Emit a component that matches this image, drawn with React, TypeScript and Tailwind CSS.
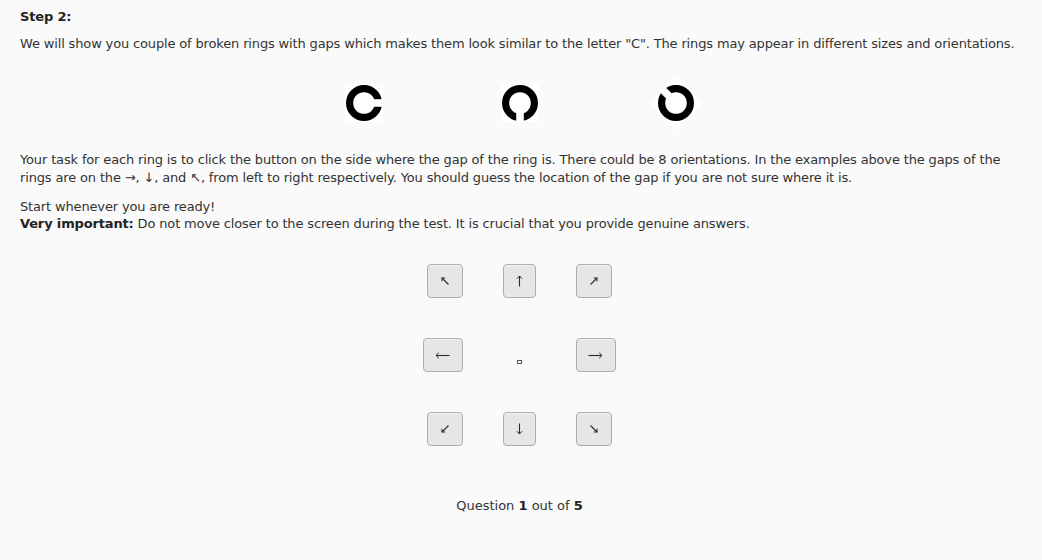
import React from "react"

type Dir = "ul" | "u" | "ur" | "l" | "r" | "dl" | "d" | "dr"

// tiny arrow glyph drawn to match the button labels
function ArrowIcon({ dir }: { dir: Dir }) {
  if (dir === "l" || dir === "r") {
    return (
      <svg width="15" height="7" viewBox="0 0 15 7" className={dir === "r" ? "rotate-180" : ""}>
        <path d="M1 3.5H14.5" stroke="#2b2b2b" strokeWidth="1.1" />
        <path d="M3.8 0.8L1 3.5L3.8 6.2" stroke="#2b2b2b" strokeWidth="1" fill="none" />
      </svg>
    )
  }
  if (dir === "u" || dir === "d") {
    return (
      <svg width="7" height="12" viewBox="0 0 7 12" className={dir === "d" ? "rotate-180" : ""}>
        <path d="M3.5 1V11.5" stroke="#2b2b2b" strokeWidth="1.1" />
        <path d="M0.8 3.8L3.5 1L6.2 3.8" stroke="#2b2b2b" strokeWidth="1" fill="none" />
      </svg>
    )
  }
  const rot: Record<string, string> = { ul: "", ur: "rotate-90", dr: "rotate-180", dl: "-rotate-90" }
  return (
    <svg width="8" height="8" viewBox="0 0 8 8" className={rot[dir]}>
      <path d="M1 1L7.5 7.5" stroke="#2b2b2b" strokeWidth="1.1" />
      <path d="M1 4.2V1H4.2" stroke="#2b2b2b" strokeWidth="1.1" fill="none" />
    </svg>
  )
}

function ArrowButton({ dir, w }: { dir: Dir; w: string }) {
  return (
    <button
      className={`${w} h-[34px] flex items-center justify-center rounded-[4px] border border-[#adadad] bg-[#e6e6e6] shadow-[inset_0_1px_0_rgba(255,255,255,0.6)]`}
    >
      <ArrowIcon dir={dir} />
    </button>
  )
}

function Ring({ rotate }: { rotate: string }) {
  return (
    <div className={`w-[38px] h-[38px] bg-white ${rotate}`}>
      <svg width="38" height="38" viewBox="0 0 38 38">
        <circle cx="19" cy="19" r="14.4" stroke="#000" strokeWidth="7.2" fill="none" />
        <rect x="19" y="15.2" width="19" height="7.6" fill="#fff" />
      </svg>
    </div>
  )
}

export default function App() {
  return (
    <div className="min-h-[560px] bg-[#fafafa] px-5 pt-[8px] text-[13px] tracking-[-0.15px] text-[#333] font-['DejaVu_Sans',Verdana,sans-serif]">
      <p className="font-bold leading-[18px] text-[#222]">Step 2:</p>
      <p className="mt-[9px] leading-[18px]">
        We will show you couple of broken rings with gaps which makes them look similar to the letter "C". The rings may appear in different sizes and orientations.
      </p>

      {/* Example rings */}
      <div className="mt-[31px] flex justify-center gap-[118px] pr-[3px]">
        <Ring rotate="" />
        <Ring rotate="rotate-90" />
        <Ring rotate="rotate-[225deg]" />
      </div>

      <p className="mt-[29px] leading-[18px]">
        Your task for each ring is to click the button on the side where the gap of the ring is. There could be 8 orientations. In the examples above the gaps of the rings are on the →, ↓, and ↖, from left to right respectively. You should guess the location of the gap if you are not sure where it is.
      </p>
      <div className="mt-[11px] leading-[17px]">
        <p>Start whenever you are ready!</p>
        <p>
          <span className="font-bold text-[#222]">Very important:</span> Do not move closer to the screen during the test. It is crucial that you provide genuine answers.
        </p>
      </div>

      {/* Answer pad */}
      <div className="mt-[32px] flex justify-center pr-[4px]">
        <div className="grid grid-cols-[40px_113px_40px] gap-y-[40px]">
          <div className="flex justify-end"><ArrowButton dir="ul" w="w-[36px]" /></div>
          <div className="flex justify-center"><ArrowButton dir="u" w="w-[33px]" /></div>
          <div className="flex justify-start"><ArrowButton dir="ur" w="w-[36px]" /></div>

          <div className="flex justify-end"><ArrowButton dir="l" w="w-[40px]" /></div>
          <div className="flex justify-center items-end pb-[8px]">
            <div className="w-[5px] h-[4px] border border-[#555] bg-white" />
          </div>
          <div className="flex justify-start"><ArrowButton dir="r" w="w-[40px]" /></div>

          <div className="flex justify-end"><ArrowButton dir="dl" w="w-[36px]" /></div>
          <div className="flex justify-center"><ArrowButton dir="d" w="w-[33px]" /></div>
          <div className="flex justify-start"><ArrowButton dir="dr" w="w-[36px]" /></div>
        </div>
      </div>

      <p className="mt-[51px] leading-[18px] text-center pr-[3px] tracking-normal">
        Question <span className="font-bold text-[#222]">1</span> out of <span className="font-bold text-[#222]">5</span>
      </p>
    </div>
  )
}
